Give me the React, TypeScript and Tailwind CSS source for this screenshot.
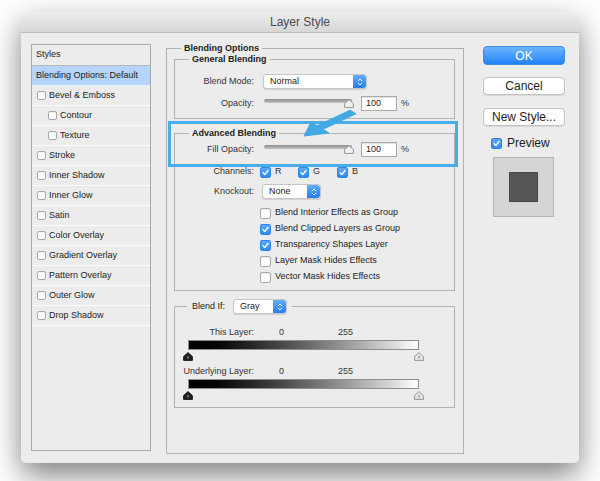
import React from "react";

const STYLE_ROWS: { label: string; indent?: boolean }[] = [
  { label: "Bevel & Emboss" },
  { label: "Contour", indent: true },
  { label: "Texture", indent: true },
  { label: "Stroke" },
  { label: "Inner Shadow" },
  { label: "Inner Glow" },
  { label: "Satin" },
  { label: "Color Overlay" },
  { label: "Gradient Overlay" },
  { label: "Pattern Overlay" },
  { label: "Outer Glow" },
  { label: "Drop Shadow" },
];

const ADVANCED_CHECKS: { label: string; checked: boolean }[] = [
  { label: "Blend Interior Effects as Group", checked: false },
  { label: "Blend Clipped Layers as Group", checked: true },
  { label: "Transparency Shapes Layer", checked: true },
  { label: "Layer Mask Hides Effects", checked: false },
  { label: "Vector Mask Hides Effects", checked: false },
];

function Check({ checked, size = "md" }: { checked: boolean; size?: "sm" | "md" }) {
  const dim = size === "sm" ? "w-[9px] h-[9px]" : "w-[11px] h-[11px]";
  if (!checked) {
    return <span className={`${dim} shrink-0 rounded-[2px] border border-[#a8a8a8] bg-white shadow-[inset_0_1px_0_rgba(0,0,0,0.06)]`} />;
  }
  return (
    <span className={`${dim} shrink-0 rounded-[2px] bg-gradient-to-b from-[#5ba9fb] to-[#2d8af5] border border-[#2f84e6] flex items-center justify-center`}>
      <svg viewBox="0 0 10 10" className="w-full h-full">
        <path d="M2.3 5.2 L4.3 7.2 L7.8 2.8" fill="none" stroke="white" strokeWidth="1.5" strokeLinecap="round" strokeLinejoin="round" />
      </svg>
    </span>
  );
}

function Select({ value, width }: { value: string; width: string }) {
  return (
    <div className={`${width} h-[15px] flex rounded-[3px] bg-white border border-[#c6c6c6] shadow-[0_1px_1px_rgba(0,0,0,0.12)]`}>
      <span className="flex-1 pl-[6px] flex items-center text-[9px] text-[#222]">{value}</span>
      <span className="w-[13px] rounded-r-[3px] bg-gradient-to-b from-[#62adfb] to-[#1c7ff5] flex items-center justify-center">
        <svg viewBox="0 0 8 12" className="w-[6px] h-[10px]">
          <path d="M1.5 4.5 L4 2 L6.5 4.5 M1.5 7.5 L4 10 L6.5 7.5" fill="none" stroke="white" strokeWidth="1.2" strokeLinecap="round" strokeLinejoin="round" />
        </svg>
      </span>
    </div>
  );
}

function Slider() {
  return (
    <div className="relative w-[90px] h-[15px] ml-[10px]">
      <div className="absolute left-0 right-[2px] top-[3px] h-[4px] rounded-full bg-gradient-to-b from-[#8c8c8c] to-[#c4c4c4]" />
      <svg viewBox="0 0 10 9" className="absolute right-0 top-[3px] w-[10px] h-[9px]">
        <path d="M5 0.6 L9.4 4.6 V8.4 H0.6 V4.6 Z" fill="#f2f2f2" stroke="#8a8a8a" strokeWidth="0.9" strokeLinejoin="round" />
      </svg>
    </div>
  );
}

function NumberBox({ value }: { value: string }) {
  return (
    <>
      <div className="ml-[7px] w-[36px] h-[15px] bg-white border border-[#a9a9a9] shadow-[inset_0_1px_1px_rgba(0,0,0,0.12)] pl-[4px] flex items-center text-[9px] text-[#222]">
        {value}
      </div>
      <span className="ml-[4px] text-[9px] text-[#333]">%</span>
    </>
  );
}

function Thumb({ dark }: { dark: boolean }) {
  return (
    <svg viewBox="0 0 10 9" className="w-[10px] h-[9px]">
      <path
        d="M5 0.6 L9.4 4.6 V8.4 H0.6 V4.6 Z"
        fill={dark ? "#1e1e1e" : "#e6e6e6"}
        stroke={dark ? "#111" : "#8a8a8a"}
        strokeWidth="0.9"
        strokeLinejoin="round"
      />
      <path d="M5 4 V6.5" stroke={dark ? "#bbb" : "#777"} strokeWidth="1" />
    </svg>
  );
}

function GradientRow({ label }: { label: string }) {
  return (
    <>
      <div className="h-[12px] flex items-center text-[9px] text-[#333]">
        <span className="w-[79px] text-right">{label}</span>
        <span className="ml-[25px]">0</span>
        <span className="ml-[54px]">255</span>
      </div>
      <div className="mt-[1px] ml-[13px] w-[231px] h-[10px] border border-[#8d8d8d] bg-gradient-to-r from-black to-white" />
      <div className="mt-[2px] ml-[8px] w-[241px] flex justify-between">
        <Thumb dark />
        <Thumb dark={false} />
      </div>
    </>
  );
}

function Label({ children }: { children: React.ReactNode }) {
  return <span className="w-[79px] shrink-0 text-right text-[9px] text-[#333]">{children}</span>;
}

export default function App() {
  return (
    <div className="relative w-[600px] h-[481px] bg-white overflow-hidden pt-[12px] pl-[21px] font-['Liberation_Sans',Arial,sans-serif]">
      <div className="w-[558px] h-[451px] rounded-[5px] bg-[#ececec] shadow-[0_12px_30px_rgba(0,0,0,0.5)] flex flex-col">
        {/* title bar */}
        <div className="h-[21px] shrink-0 rounded-t-[5px] border-b border-[#bcbcbc] bg-gradient-to-b from-[#eeeeee] to-[#d7d7d7] flex items-center justify-center text-[12px] text-[#4a4a4a]">
          Layer Style
        </div>

        <div className="flex pt-[11px] pl-[10px]">
          {/* styles list */}
          <div className="w-[120px] h-[407px] shrink-0 border border-[#a9a9a9] text-[9px] text-[#222]">
            <div className="h-[21px] pl-[4px] flex items-center border-b border-[#b9b9b9]">Styles</div>
            <div className="h-[20px] pl-[4px] flex items-center bg-[#b4d4fa] border-b border-white/70">Blending Options: Default</div>
            {STYLE_ROWS.map((row) => (
              <div
                key={row.label}
                className={`h-[20px] flex items-center gap-[3px] border-b border-white/80 ${row.indent ? "pl-[16px]" : "pl-[5px]"}`}
              >
                <Check checked={false} size="sm" />
                <span>{row.label}</span>
              </div>
            ))}
          </div>

          {/* blending options */}
          <fieldset className="ml-[15px] -mt-[1px] w-[298px] h-[411px] shrink-0 border border-[#b2b2b2] pl-[7px] pr-[8px]">
            <legend className="ml-[7px] px-[3px] leading-[11px] text-[9px] font-bold text-[#222]">Blending Options</legend>

            <fieldset className="border border-[#b2b2b2] pt-[9px] pb-[7px]">
              <legend className="ml-[14px] px-[3px] leading-[11px] text-[9px] font-bold text-[#222]">General Blending</legend>
              <div className="h-[15px] flex items-center">
                <Label>Blend Mode:</Label>
                <div className="ml-[9px]">
                  <Select value="Normal" width="w-[104px]" />
                </div>
              </div>
              <div className="mt-[7px] h-[15px] flex items-center">
                <Label>Opacity:</Label>
                <Slider />
                <NumberBox value="100" />
              </div>
            </fieldset>

            <fieldset className="mt-[9px] border border-[#b2b2b2] pt-[3px] pb-[5px]">
              <legend className="ml-[14px] px-[3px] leading-[11px] text-[9px] font-bold text-[#222]">Advanced Blending</legend>
              <div className="h-[15px] flex items-center">
                <Label>Fill Opacity:</Label>
                <Slider />
                <NumberBox value="100" />
              </div>
              <div className="mt-[8px] h-[14px] flex items-center text-[9px] text-[#333]">
                <Label>Channels:</Label>
                <div className="ml-[6px] w-[38px] flex items-center gap-[4px]">
                  <Check checked />
                  <span>R</span>
                </div>
                <div className="w-[39px] flex items-center gap-[4px]">
                  <Check checked />
                  <span>G</span>
                </div>
                <div className="flex items-center gap-[4px]">
                  <Check checked />
                  <span>B</span>
                </div>
              </div>
              <div className="mt-[5px] h-[15px] flex items-center">
                <Label>Knockout:</Label>
                <div className="ml-[8px]">
                  <Select value="None" width="w-[59px]" />
                </div>
              </div>
              <div className="mt-[6px] pl-[85px]">
                {ADVANCED_CHECKS.map((c) => (
                  <div key={c.label} className="h-[16px] flex items-center gap-[4px] text-[9px] text-[#222]">
                    <Check checked={c.checked} />
                    <span>{c.label}</span>
                  </div>
                ))}
              </div>
            </fieldset>

            <fieldset className="mt-[8px] border border-[#b2b2b2] pt-[13px] pb-[7px]">
              <legend className="ml-[12px] px-[5px] flex items-center gap-[8px] text-[9px] text-[#222]">
                <span>Blend If:</span>
                <Select value="Gray" width="w-[54px]" />
              </legend>
              <GradientRow label="This Layer:" />
              <div className="mt-[5px]">
                <GradientRow label="Underlying Layer:" />
              </div>
            </fieldset>
          </fieldset>

          {/* buttons */}
          <div className="ml-[19px] mt-[2px] w-[82px] shrink-0 flex flex-col">
            <div className="h-[19px] rounded-[4px] border border-[#3b8ae6] bg-gradient-to-b from-[#6db5fc] to-[#1f81f7] flex items-center justify-center text-[12px] text-white">
              OK
            </div>
            <div className="mt-[12px] h-[18px] rounded-[4px] border border-[#c2c2c2] bg-white shadow-[0_1px_0_rgba(0,0,0,0.08)] flex items-center justify-center text-[12px] text-[#222]">
              Cancel
            </div>
            <div className="mt-[13px] h-[18px] rounded-[4px] border border-[#c2c2c2] bg-white shadow-[0_1px_0_rgba(0,0,0,0.08)] flex items-center justify-center text-[12px] text-[#222]">
              New Style...
            </div>
            <div className="mt-[11px] h-[12px] pl-[8px] flex items-center gap-[5px] text-[12px] text-[#222]">
              <Check checked />
              <span>Preview</span>
            </div>
            <div className="mt-[8px] ml-[10px] w-[61px] h-[60px] border border-[#b4b4b4] bg-[#d5d5d5] flex items-center justify-center">
              <div className="w-[29px] h-[30px] bg-[#565656] border border-[#484848]" />
            </div>
          </div>
        </div>
      </div>

      {/* callout highlight over Advanced Blending */}
      <div className="absolute left-[168px] top-[121px] w-[290px] h-[46px] border-[3px] border-[#48ade6]" />
      <svg className="absolute left-0 top-0 w-[600px] h-[481px] pointer-events-none" viewBox="0 0 600 481">
        <polygon
          points="350,110.2 317,125.7 311,122 304,136 329,133 323,129.3 356,113.8"
          fill="#43a9e5"
          stroke="#43a9e5"
          strokeWidth="1"
          strokeLinejoin="round"
        />
      </svg>
    </div>
  );
}
